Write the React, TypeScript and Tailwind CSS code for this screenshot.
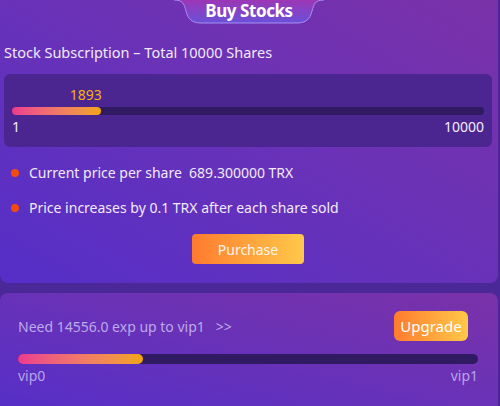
import React from "react";

function Bar({ pct, h }: { pct: number; h: string }) {
  return (
    <div className={`relative w-full rounded-full bg-[#301a62] ${h}`}>
      <div
        className="absolute left-0 top-0 h-full rounded-full bg-gradient-to-r from-[#ec3a8e] to-[#f2a500]"
        style={{ width: `${pct}%` }}
      />
    </div>
  );
}

function TabShape() {
  return (
    <svg className="absolute inset-0" width="150" height="24" viewBox="0 0 150 24">
      <defs>
        <linearGradient id="tabg" x1="0" y1="0" x2="0" y2="1">
          <stop offset="0" stopColor="#9c37b6" />
          <stop offset="1" stopColor="#6a50d8" />
        </linearGradient>
      </defs>
      <path
        d="M0,0 L150,0 C141,0 140,4 138,11 C136,19 132,23 123,23 L27,23 C18,23 14,19 12,11 C10,4 9,0 0,0 Z"
        fill="url(#tabg)"
      />
      <path
        d="M150,0 C141,0 140,4 138,11 C136,19 132,23 123,23 L27,23 C18,23 14,19 12,11 C10,4 9,0 0,0"
        fill="none"
        stroke="#a690f4"
        strokeWidth="1"
      />
    </svg>
  );
}

export default function App() {
  const sold = 1893;
  const total = 10000;
  const pct = (sold / total) * 100;

  return (
    <div
      className="w-[500px] h-[406px] overflow-hidden bg-[#4a2898] text-white"
      style={{ fontFamily: '"Noto Sans", "Liberation Sans", sans-serif' }}
    >
      {/* Stock card */}
      <div className="w-[498px] h-[283px] rounded-b-lg bg-gradient-to-tr from-[#552ec8] to-[#7a31a8] pl-1 pr-[6px]">
        <div className="flex justify-center pl-[2px]">
          <div className="relative h-[24px] w-[150px] flex items-center justify-center">
            <TabShape />
            <span className="relative -mt-[3px] text-[17px] font-bold leading-none tracking-tight">Buy Stocks</span>
          </div>
        </div>

        <div className="mt-[18px] text-[14.5px] leading-5 text-[#f2eafb]">
          Stock Subscription – Total 10000 Shares
        </div>

        <div className="mt-[12px] h-[73px] rounded-md bg-[#4b2691] px-2 pt-[11px]">
          <div className="relative h-[20px]">
            <span
              className="absolute top-0 -translate-x-1/2 text-[14px] leading-5 text-[#f5b10c]"
              style={{ left: `${pct - 3.3}%` }}
            >
              {sold}
            </span>
          </div>
          <div className="mt-[2px]">
            <Bar pct={pct} h="h-[8px]" />
          </div>
          <div className="mt-[2px] flex justify-between text-[14px] leading-5 text-[#f4eefc]">
            <span>1</span>
            <span>{total}</span>
          </div>
        </div>

        <div className="mt-[16px] flex flex-col gap-[15px] pl-[7px] text-[14px] leading-5 text-[#f2eafc]">
          <div className="flex items-center gap-[10px]">
            <span className="h-[8px] w-[8px] rounded-full bg-[#f24a12]" />
            <span>Current price per share&nbsp; 689.300000 TRX</span>
          </div>
          <div className="flex items-center gap-[10px]">
            <span className="h-[8px] w-[8px] rounded-full bg-[#f24a12]" />
            <span>Price increases by 0.1 TRX after each share sold</span>
          </div>
        </div>

        <div className="mt-[16px] flex justify-center">
          <button className="h-[30px] w-[112px] rounded bg-gradient-to-r from-[#ff7a2e] to-[#ffc84a] text-[14px] text-[#fff4ea]">
            Purchase
          </button>
        </div>
      </div>

      {/* VIP card */}
      <div className="mt-[10px] h-[120px] w-[498px] rounded-t-lg bg-gradient-to-tr from-[#552ec8] to-[#7a31a8] px-[18px] pt-[18px]">
        <div className="flex items-center justify-between pr-[12px]">
          <span className="text-[14px] text-[#bca9ec]">Need 14556.0 exp up to vip1&nbsp;&nbsp; &gt;&gt;</span>
          <button className="h-[30px] w-[74px] rounded-md bg-gradient-to-r from-[#ff7a2e] to-[#ffc84a] text-[15px] text-white">
            Upgrade
          </button>
        </div>
        <div className="mt-[13px] pr-[2px]">
          <Bar pct={27.2} h="h-[10px]" />
        </div>
        <div className="mt-[2px] flex justify-between pr-[2px] text-[14px] leading-5 text-[#b6a4ec]">
          <span>vip0</span>
          <span>vip1</span>
        </div>
      </div>
    </div>
  );
}
